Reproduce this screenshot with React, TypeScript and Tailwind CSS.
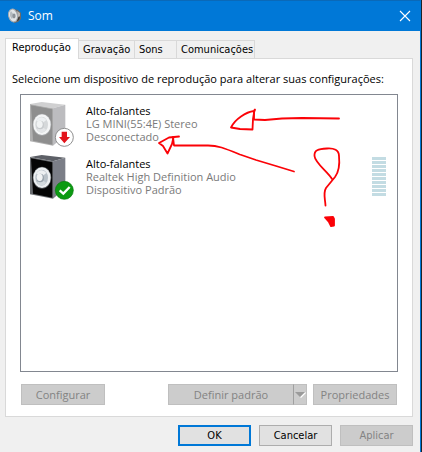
import { useState } from 'react';
import clsx from 'clsx';

type DeviceStatus = 'disconnected' | 'default';

interface Device {
  id: string;
  name: string;
  driver: string;
  state: string;
  status: DeviceStatus;
}

const TABS = [
  { name: 'Reprodução', width: 'w-[74px]' },
  { name: 'Gravação', width: 'w-14' },
  { name: 'Sons', width: 'w-[42px]' },
  { name: 'Comunicações', width: 'w-[78px]' },
];

const DEVICES: Device[] = [
  { id: 'lg', name: 'Alto-falantes', driver: 'LG MINI(55:4E) Stereo', state: 'Desconectado', status: 'disconnected' },
  { id: 'realtek', name: 'Alto-falantes', driver: 'Realtek High Definition Audio', state: 'Dispositivo Padrão', status: 'default' },
];

function SpeakerIcon({ status }: { status: DeviceStatus }) {
  const off = status === 'disconnected';
  return (
    <svg width="46" height="48" viewBox="0 0 138 144" className="shrink-0" aria-hidden="true">
      <path d="M3 9 38 3 109 11 72 22Z" fill={off ? '#d0d0d1' : '#5d6067'} />
      <path d="M72 22 109 11V102L72 134Z" fill={off ? '#bcbcbf' : '#7b7e87'} />
      <path d="M3 9 72 22V134L3 121Z" fill={off ? '#b0b0b0' : '#6a6d71'} />
      <path d="M6 13 70 25V131L12 119Z" fill={off ? '#8e8e8e' : '#050505'} />
      <ellipse cx="39" cy="71" rx="28" ry="33" fill={off ? '#a4a6a8' : '#4f5357'} />
      <ellipse cx="39" cy="71" rx="26" ry="31" fill={off ? '#f4f5f6' : '#eceff1'} />
      <ellipse cx="38" cy="71" rx="19" ry="24" fill={off ? '#d5d8da' : '#b9c2c9'} />
      <path d="M22 60C26 48 42 44 52 57L38 68Z" fill="#edf0f2" />
      <path d="M24 86C31 97 43 97 52 87L38 76Z" fill={off ? '#e4e6e8' : '#d3dade'} />
      <ellipse cx="34" cy="72" rx="11" ry="13" fill={off ? '#c8cbce' : '#99a3ac'} />
      <ellipse cx="32" cy="70" rx="9" ry="11" fill="#f1f3f4" />
      {off ? (
        <>
          <circle cx="106" cy="109" r="27" fill="#fff" stroke="#8f8f8f" strokeWidth="3" />
          <path d="M98 92H114V108H123L106 127 90 108H98Z" fill="#e3141c" />
        </>
      ) : (
        <>
          <circle cx="106" cy="109" r="27" fill="#0c9a12" stroke="#087c0d" strokeWidth="2" />
          <path d="M92 109 103 119 122 99" fill="none" stroke="#fff" strokeWidth="7" />
        </>
      )}
    </svg>
  );
}

function TitleIcon() {
  return (
    <svg width="14" height="16" viewBox="0 0 14 16" aria-hidden="true">
      <path d="M5 1 10 2 13 5V11L10 14 6 15Z" fill="#6f6a66" />
      <path d="M9 3 12 5V8L10 9Z" fill="#b9b5b0" />
      <path d="M9 10 12 9 11 12 9 13Z" fill="#3f3b38" />
      <ellipse cx="5" cy="7.5" rx="4.4" ry="6.5" fill="#e2e5e7" stroke="#a6abb0" transform="rotate(-12 5 7.5)" />
      <path d="M3 3 6 7 4 11C2 9 1 6 3 3Z" fill="#b5bbc0" />
      <ellipse cx="6" cy="8" rx="1.6" ry="2.4" fill="#8b9197" />
    </svg>
  );
}

function LevelMeter() {
  return (
    <div className="mr-[11px] ml-auto flex w-3.5 flex-col gap-px self-start pt-[3px]" role="meter" aria-label="Nível" aria-valuenow={0}>
      {Array.from({ length: 10 }, (_, i) => (
        <span key={i} className="h-[3px] bg-[#c3dce3]" />
      ))}
    </div>
  );
}

// Freehand red pen marks laid over the device list
function PenMarks() {
  return (
    <svg
      width="377"
      height="276"
      viewBox="21 95 377 276"
      className="pointer-events-none absolute top-0 left-0"
      fill="none"
      stroke="#fb0207"
      strokeWidth="1.8"
      strokeLinecap="round"
      strokeLinejoin="round"
      aria-hidden="true"
    >
      <path d="M339 118.500 302 118 282 118.500 265 120 254 119.500 254 112 255 109.500" />
      <path d="M254 111C246 112 235 119 231 127.500L240 129 252.500 129.500 253 119 254.500 110" />
      <path d="M294 171.500 276 166 256 160 240 154.500C224 148 218 145.500 208 145.500L174 145.500 173 137" />
      <path d="M179 136.500 169 137.500 159 143 163 146 167.500 153.500 172 144 173.500 137" />
      <path d="M332 179C328 172 315 163 314.500 156 314 150 318 149 327 148.500 334 148 339 150 339 156 340 166 338 173 335 177L326 188C323 193 325 198 325.500 205.500" />
      <path d="M325 217.500 333 217 334 219V225.500L331 226 329 222Z" fill="#fb0207" />
    </svg>
  );
}

const panelButton = 'h-[21px] border border-[#bfbfbf] bg-[#cccccc] leading-4 text-[#838383]';
const dialogButton = 'h-[21px] w-[73px] font-[DejaVu_Sans_Condensed,sans-serif] leading-4';

export default function App() {
  const [tab, setTab] = useState('Reprodução');

  return (
    <div className="border-r border-[#1d2327] font-['Open_Sans',sans-serif] text-[11px] text-black">
      <div className="border-r border-[#0078d7] bg-[#f0f0f0]">
        {/* Title bar */}
        <header className="flex h-[31px] items-center border-t border-[#0a69b8] bg-[#0078d7] pr-[9px] pl-2 text-white">
          <TitleIcon />
          <h1 className="ml-1.5 text-[12px] leading-4">Som</h1>
          <button type="button" aria-label="Fechar" className="ml-auto">
            <svg width="12" height="12" viewBox="0 0 12 12" aria-hidden="true">
              <path d="M1 1 11 11M11 1 1 11" stroke="#fff" strokeWidth="1.1" />
            </svg>
          </button>
        </header>

        <main className="pt-[7px] pr-[7px] pb-1.5 pl-[5px]">
          {/* Tabs */}
          <div role="tablist" className="flex h-5 items-end font-[DejaVu_Sans_Condensed,sans-serif]">
            {TABS.map(({ name, width }) => (
              <button
                key={name}
                type="button"
                role="tab"
                aria-selected={tab === name}
                onClick={() => setTab(name)}
                className={clsx(
                  'border-[#d9d9d9] text-left leading-4 whitespace-nowrap',
                  width,
                  tab === name
                    ? 'relative z-10 -mb-px h-[21px] border-x border-t bg-white pb-0.5 pl-1.5'
                    : 'h-[18px] border-t border-r bg-[#f0f0f0] pl-1'
                )}
              >
                {name}
              </button>
            ))}
          </div>

          {/* Panel */}
          <section className="border border-[#d9d9d9] bg-white px-3.5 pt-3 pb-[11px]">
            <p className="-ml-2 leading-4 whitespace-nowrap">
              Selecione um dispositivo de reprodução para alterar suas configurações:
            </p>

            <div className="relative mt-[7px] h-[278px] border border-[#828790] bg-white pt-1.5 pl-2">
              <ul>
                {DEVICES.map((device) => (
                  <li key={device.id} className="flex h-[53px]">
                    <SpeakerIcon status={device.status} />
                    <div className="ml-[11px] pt-[3px] leading-[13px] text-[#7a7a7a]">
                      <p className="text-black">{device.name}</p>
                      <p>{device.driver}</p>
                      <p>{device.state}</p>
                    </div>
                    {device.status === 'default' && <LevelMeter />}
                  </li>
                ))}
              </ul>
              <PenMarks />
            </div>

            <div className="mt-3 flex px-px">
              <button type="button" disabled className={clsx(panelButton, 'w-[84px]')}>
                Configurar
              </button>
              <div className="mr-1.5 ml-auto flex">
                <button type="button" disabled className={clsx(panelButton, 'w-[125px] border-r-0')}>
                  Definir padrão
                </button>
                <button
                  type="button"
                  disabled
                  aria-label="Mais opções"
                  className={clsx(panelButton, 'flex w-3.5 items-center justify-center border-l-[#a0a0a0]')}
                >
                  <svg width="11" height="8" viewBox="0 0 11 8" className="shrink-0" aria-hidden="true">
                    <path d="M5 6 10 1 11 2 6 7Z" fill="#fff" />
                    <path d="M0 1H10L5 6Z" fill="#9a9a9a" />
                  </svg>
                </button>
              </div>
              <button type="button" disabled className={clsx(panelButton, 'w-[84px]')}>
                Propriedades
              </button>
            </div>
          </section>

          {/* Dialog actions */}
          <footer className="mt-2 flex justify-end gap-2">
            <button type="button" className={clsx(dialogButton, 'border-2 border-[#0078d7] bg-[#e1e1e1]')}>
              OK
            </button>
            <button type="button" className={clsx(dialogButton, 'border border-[#adadad] bg-[#e1e1e1]')}>
              Cancelar
            </button>
            <button type="button" disabled className={clsx(dialogButton, 'border border-[#bfbfbf] bg-[#cccccc] text-[#838383]')}>
              Aplicar
            </button>
          </footer>
        </main>
      </div>
    </div>
  );
}
